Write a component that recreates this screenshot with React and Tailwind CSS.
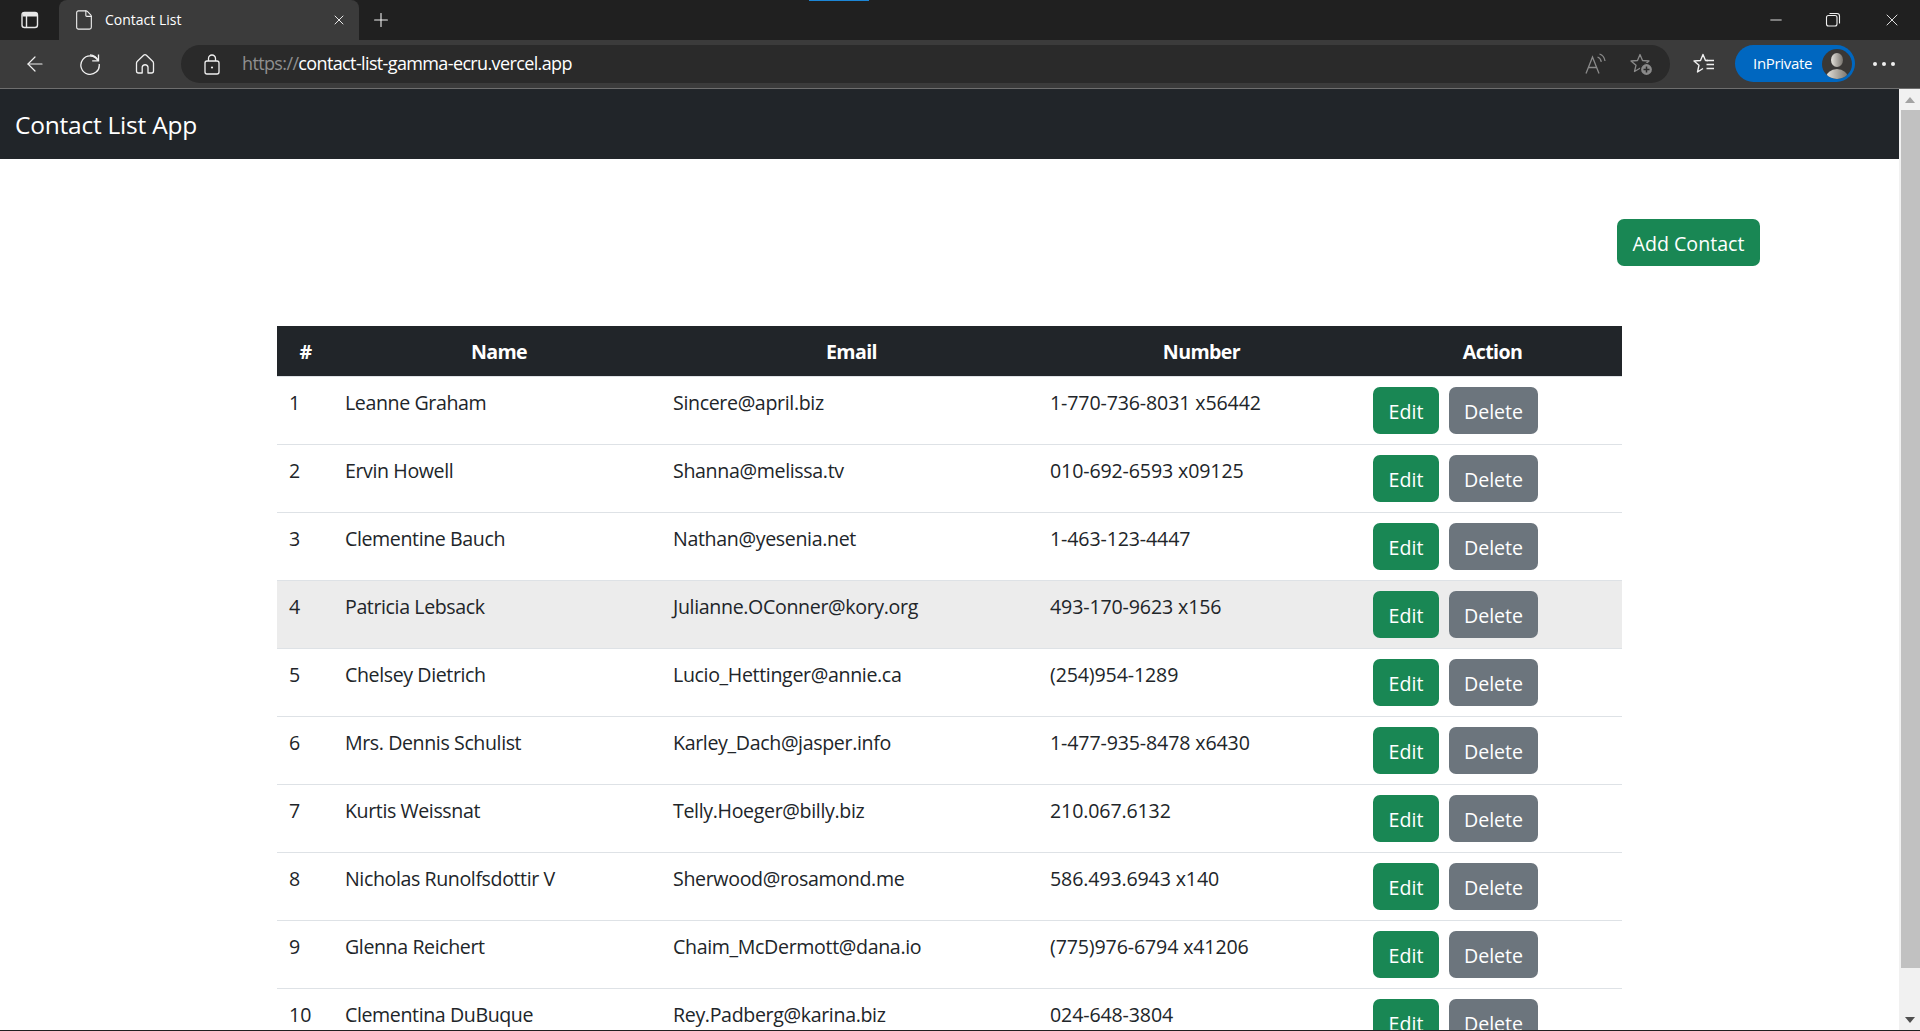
import { X, Plus, Minus, File, ArrowLeft } from "lucide-react";

const contacts = [
  ["Leanne Graham", "Sincere@april.biz", "1-770-736-8031 x56442"],
  ["Ervin Howell", "Shanna@melissa.tv", "010-692-6593 x09125"],
  ["Clementine Bauch", "Nathan@yesenia.net", "1-463-123-4447"],
  ["Patricia Lebsack", "Julianne.OConner@kory.org", "493-170-9623 x156"],
  ["Chelsey Dietrich", "Lucio_Hettinger@annie.ca", "(254)954-1289"],
  ["Mrs. Dennis Schulist", "Karley_Dach@jasper.info", "1-477-935-8478 x6430"],
  ["Kurtis Weissnat", "Telly.Hoeger@billy.biz", "210.067.6132"],
  ["Nicholas Runolfsdottir V", "Sherwood@rosamond.me", "586.493.6943 x140"],
  ["Glenna Reichert", "Chaim_McDermott@dana.io", "(775)976-6794 x41206"],
  ["Clementina DuBuque", "Rey.Padberg@karina.biz", "024-648-3804"],
];

const headers = [
  ["#", "pl-[13px] pr-[12px]"],
  ["Name", "pl-[15px] pr-[11px]"],
  ["Email", "pl-[15px] pr-[11px]"],
  ["Number", "pl-[15px] pr-[11px]"],
  ["Action", "pl-[14px] pr-[12px]"],
];

function TabsIcon() {
  return (
    <svg width="20" height="20" viewBox="0 0 20 20" fill="none" stroke="#e8e8e8" strokeWidth="1.4">
      <rect x="2" y="2.5" width="15.5" height="15" rx="2.5" />
      <rect x="2.5" y="3" width="14.5" height="3.5" fill="#e8e8e8" stroke="none" />
      <path d="M6.5 6v11" />
    </svg>
  );
}

function ReloadIcon() {
  return (
    <svg width="24" height="24" viewBox="0 0 24 24" fill="none" stroke="#f0f0f0" strokeWidth="1.3">
      <path d="M20 8.500A9.200 9.200 0 1 0 21.200 12" />
      <path d="M20 8.500A9.200 9.200 0 0 0 12 2.800" />
      <path d="M20.500 2.500v6.300h-6.300" />
    </svg>
  );
}

function HomeIcon() {
  return (
    <svg width="24" height="24" viewBox="0 0 24 24" fill="none" stroke="#f0f0f0" strokeWidth="1.3" strokeLinejoin="round">
      <path d="M10.600 3.300a2 2 0 0 1 2.800 0l6.200 6a2.500 2.500 0 0 1 .900 1.900V19a2 2 0 0 1-2 2h-3.500v-6a3 3 0 0 0-5.800 0v6H5.500a2 2 0 0 1-2-2v-7.800a2.500 2.500 0 0 1 .900-1.900z" />
    </svg>
  );
}

function LockIcon() {
  return (
    <svg width="22" height="22" viewBox="0 0 22 22" fill="none" stroke="#f0f0f0" strokeWidth="1.300">
      <rect x="4" y="8" width="14" height="13" rx="2" />
      <path d="M7.500 8V5.500a3.500 3.500 0 0 1 7 0V8" />
      <circle cx="11" cy="14.500" r="1.100" fill="#f0f0f0" stroke="none" />
    </svg>
  );
}

function ReadAloudIcon() {
  return (
    <svg width="24" height="24" viewBox="0 0 24 24" fill="none" stroke="#8a8a8a" strokeWidth="1.300">
      <path d="M2 21.500 8.500 5l6.500 16.500M4.500 15.500h8" />
      <path d="M13.500 5c2 .7 3.400 2.300 3.800 4.800M15.500 2c3 1 5 3.500 5.500 7" />
    </svg>
  );
}

function FavAddIcon() {
  return (
    <svg width="24" height="24" viewBox="0 0 24 24" fill="none" stroke="#8a8a8a" strokeWidth="1.300" strokeLinejoin="round">
      <path d="M11 2.500 13.500 8.500 20 9 15 13.200 16.500 19.500 11 16.200 5.500 19.500 7 13.200 2 9 8.500 8.500Z" />
      <circle cx="17.500" cy="17.500" r="6" fill="#8a8a8a" stroke="#2a2a2a" strokeWidth="1.200" />
      <path d="M17.500 14.500v6M14.500 17.500h6" stroke="#2a2a2a" strokeWidth="1.500" />
    </svg>
  );
}

function FavoritesIcon() {
  return (
    <svg width="24" height="24" viewBox="0 0 24 24" fill="none" stroke="#f0f0f0" strokeWidth="1.400" strokeLinejoin="round">
      <path d="M16 8.500H13.500L11 2.500 8.500 8.500 2 9 7 13.200 5.500 20 11 16.500" />
      <path d="M14.500 8.500H22M14.500 12.500H22M14.500 16.500H22" />
    </svg>
  );
}

function Avatar() {
  return (
    <svg width="30" height="30" viewBox="0 0 30 30">
      <defs>
        <linearGradient id="person" x1="0" y1="0" x2="1" y2="0">
          <stop offset="0" stopColor="#e6e3dc" />
          <stop offset="1" stopColor="#77736d" />
        </linearGradient>
        <clipPath id="round">
          <circle cx="15" cy="15" r="15" />
        </clipPath>
      </defs>
      <g clipPath="url(#round)">
        <rect width="30" height="30" fill="#3a3836" />
        <ellipse cx="15" cy="11" rx="6" ry="7" fill="url(#person)" />
        <ellipse cx="15" cy="29" rx="11" ry="9" fill="url(#person)" />
      </g>
    </svg>
  );
}

function Browser() {
  return (
    <div className="shrink-0 text-white">
      <div className="relative flex h-10 items-end bg-[#202020]">
        <div className="absolute left-[809px] top-0 h-px w-[60px] bg-[#1c86d6]" />
        <div className="flex h-10 w-[59px] items-center pl-[20px]">
          <TabsIcon />
        </div>
        <div className="flex h-10 w-[300px] items-center rounded-t-lg bg-[#3b3b3b] pl-[14px] pr-[12px]">
          <File size={22} strokeWidth={1.2} color="#f0f0f0" />
          <span className="ml-[10px] flex-1 pb-[2px] text-[14px]">Contact List</span>
          <X size={16} strokeWidth={1.5} color="#e8e8e8" />
        </div>
        <div className="flex h-10 w-[44px] items-center justify-center">
          <Plus size={22} strokeWidth={1.2} color="#f0f0f0" />
        </div>
        <div className="ml-auto flex h-10 items-center pr-[18px]">
          <Minus size={18} strokeWidth={1.2} color="#f0f0f0" />
          <div className="ml-[40px]">
            <svg width="16" height="16" viewBox="0 0 16 16" fill="none" stroke="#f0f0f0" strokeWidth="1.100">
              <rect x="1.500" y="3.500" width="10.500" height="10.500" rx="2" />
              <path d="M4.500 1.500h7.500a2.500 2.500 0 0 1 2.500 2.500v7.500" />
            </svg>
          </div>
          <div className="ml-[41px]">
            <X size={20} strokeWidth={1.100} color="#f0f0f0" />
          </div>
        </div>
      </div>
      <div className="flex h-[49px] items-center border-b border-[#6e6e6e] bg-[#3b3b3b] pb-px">
        <div className="flex w-[181px] items-center pl-[23px]">
          <ArrowLeft size={24} strokeWidth={1.200} color="#f0f0f0" />
          <div className="ml-[31px]">
            <ReloadIcon />
          </div>
          <div className="ml-[31px]">
            <HomeIcon />
          </div>
        </div>
        <div className="flex h-[38px] w-[1489px] items-center rounded-full bg-[#2a2a2a]">
          <div className="ml-[20px]">
            <LockIcon />
          </div>
          <span className="ml-[19px] text-[18px] tracking-[-0.63px]">
            <span className="text-[#8f8f8f]">https://</span>contact-list-gamma-ecru.vercel.app
          </span>
          <div className="ml-auto flex items-center pr-[17px]">
            <ReadAloudIcon />
            <div className="ml-[21px]">
              <FavAddIcon />
            </div>
          </div>
        </div>
        <div className="ml-[22px]">
          <FavoritesIcon />
        </div>
        <div className="ml-[19px] flex h-[37px] w-[120px] items-center justify-between rounded-full bg-[#0067c0] pl-[18px] pr-[3px]">
          <span className="text-[15px] tracking-[-0.3px]">InPrivate</span>
          <Avatar />
        </div>
        <div className="ml-[18px] flex gap-[5px]">
          <span className="size-[4px] rounded-full bg-[#f0f0f0]" />
          <span className="size-[4px] rounded-full bg-[#f0f0f0]" />
          <span className="size-[4px] rounded-full bg-[#f0f0f0]" />
        </div>
      </div>
    </div>
  );
}

function Row({ index, contact }) {
  const hover = index === 3;
  return (
    <tr className={`h-[68px] border-b border-[#dee2e6] align-top ${hover ? "bg-[#ececec]" : ""}`}>
      <td className="px-3 pt-[11px]">{index + 1}</td>
      <td className="px-3 pt-[11px] tracking-[-0.4px]">{contact[0]}</td>
      <td className="px-3 pt-[11px] tracking-[-0.35px]">{contact[1]}</td>
      <td className="px-3 pt-[11px] tracking-[-0.13px]">{contact[2]}</td>
      <td className="px-3 pt-[10px]">
        <div className="flex gap-[10px]">
          <button className="h-[47px] w-[66px] rounded-[7px] bg-[#198754] pt-[3px] text-white">Edit</button>
          <button className="h-[47px] w-[89px] rounded-[7px] bg-[#6c757d] pt-[3px] text-white">Delete</button>
        </div>
      </td>
    </tr>
  );
}

export default function App() {
  return (
    <div className="flex h-[1031px] flex-col overflow-hidden bg-white font-['Open_Sans',sans-serif] text-[19.6px] text-[#212529]">
      <Browser />
      <div className="flex min-h-0 flex-1 border-b border-[#202020]">
        <div className="min-w-0 flex-1 overflow-hidden">
          <nav className="flex h-[70px] items-center bg-[#212529] pl-[15px] pt-[2px] text-[24.500px] tracking-[-0.23px] text-white">
            Contact List App
          </nav>
          <div className="flex justify-end pr-[139px] pt-[60px]">
            <button className="h-[47px] w-[143px] rounded-[7px] bg-[#198754] pt-[2px] text-white">Add Contact</button>
          </div>
          <table className="ml-[277px] mt-[60px] w-[1345px] table-fixed border-collapse">
            <colgroup>
              <col className="w-[56px]" />
              <col className="w-[328px]" />
              <col className="w-[377px]" />
              <col className="w-[323px]" />
              <col className="w-[261px]" />
            </colgroup>
            <thead>
              <tr className="h-[50px] border-b border-[#dee2e6] bg-[#212529] text-white">
                {headers.map(([label, padding]) => (
                  <th key={label} className={`${padding} pt-[2px] text-center font-bold tracking-[-0.6px]`}>
                    {label}
                  </th>
                ))}
              </tr>
            </thead>
            <tbody>
              {contacts.map((contact, index) => (
                <Row key={contact[1]} index={index} contact={contact} />
              ))}
            </tbody>
          </table>
        </div>
        <div className="flex w-[21px] shrink-0 flex-col bg-[#f1f1f1]">
          <div className="flex h-[21px] items-center justify-center">
            <div className="border-x-[5px] border-b-[6px] border-x-transparent border-b-[#a3a3a3]" />
          </div>
          <div className="ml-[2px] h-[858px] bg-[#c1c1c1]" />
          <div className="mt-auto flex h-[21px] items-center justify-center">
            <div className="border-x-[5px] border-t-[6px] border-x-transparent border-t-[#505050]" />
          </div>
        </div>
      </div>
    </div>
  );
}
